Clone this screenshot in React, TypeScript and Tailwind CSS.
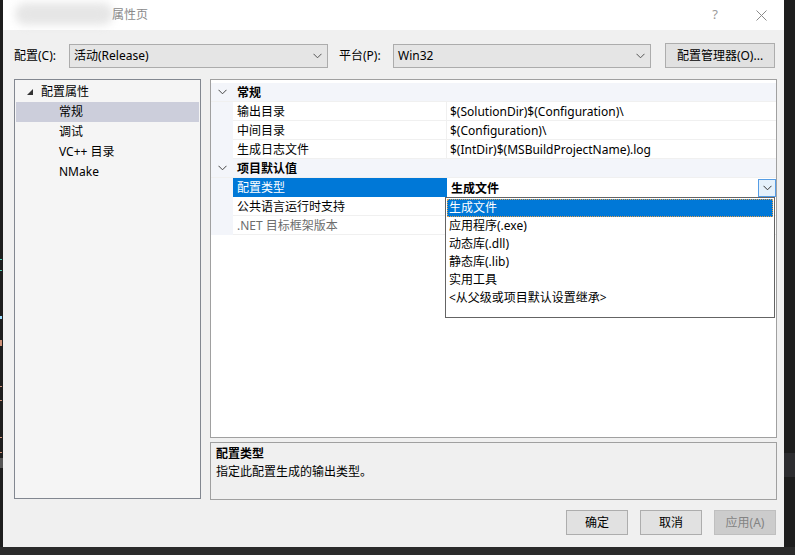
import React from "react";

const FONT = { fontFamily: '"Noto Sans", "Noto Sans CJK SC", sans-serif' };

function Chevron({ className = "" }: { className?: string }) {
  return (
    <svg width="9" height="6" viewBox="0 0 9 6" className={className}>
      <path d="M0.5 0.8 L4.5 4.8 L8.5 0.8" fill="none" stroke="currentColor" strokeWidth="1" />
    </svg>
  );
}

function GridHeader({ label }: { label: string }) {
  return (
    <div className="flex h-[19px] bg-[#f3f5fa] border-b border-[#f0f0f0]">
      <div className="w-[22px] flex items-center justify-center text-[#444]">
        <Chevron />
      </div>
      <div className="flex-1 pl-[4px] font-bold text-black leading-[19px]">{label}</div>
    </div>
  );
}

function GridRow({ name, value, dim }: { name: string; value: string; dim?: boolean }) {
  return (
    <div className="flex h-[19px]">
      <div className="w-[22px] bg-[#f3f5fa]" />
      <div className={`w-[214px] pl-[4px] leading-[19px] bg-white border-b border-[#f0f0f0] border-r border-r-[#f0f0f0] ${dim ? "text-[#6d6d6d]" : "text-black"}`}>
        {name}
      </div>
      <div className="flex-1 pl-[3px] leading-[19px] bg-white border-b border-[#f0f0f0] text-black">{value}</div>
    </div>
  );
}

export default function App() {
  return (
    <div className="relative w-[795px] h-[555px] bg-[#1e1e1e] overflow-hidden text-[12px]" style={FONT}>
      <div className="flex h-[547px]">
        {/* left dark strip with specks */}
        <div className="w-[3px] relative bg-[#1e1e1e]">
          <div className="absolute top-[259px] left-0 w-[2px] h-[1px] bg-[#4ec9b0]" />
          <div className="absolute top-[270px] left-0 w-[2px] h-[1px] bg-[#4ec9b0]" />
          <div className="absolute top-[316px] left-0 w-[2px] h-[3px] bg-[#9cdcfe]" />
          <div className="absolute top-[340px] left-0 w-[2px] h-[6px] bg-[#ce9178]" />
          <div className="absolute top-[386px] left-0 w-[2px] h-[1px] bg-[#ce9178]" />
          <div className="absolute top-[400px] left-0 w-[2px] h-[1px] bg-[#ce9178]" />
          <div className="absolute top-[437px] left-0 w-[2px] h-[1px] bg-[#ce9178]" />
          <div className="absolute top-[452px] left-0 w-[2px] h-[1px] bg-[#ce9178]" />
          <div className="absolute top-[458px] left-0 w-[3px] h-[10px] bg-[#555]" />
        </div>

        {/* dialog */}
        <div className="w-[781px] h-[547px] bg-[#f0f0f0] flex flex-col">
          {/* title bar */}
          <div className="h-[30px] bg-white flex items-center relative">
            <div className="absolute left-[12px] top-[3px] w-[98px] h-[22px] rounded-[10px] bg-[#e6e6e6] blur-[4px]" />
            <div className="ml-[109px] text-[#8a8a8a] text-[12px] relative">属性页</div>
            <div className="flex-1" />
            <div className="text-[#9a9a9a] text-[13px] mr-[38px]">?</div>
            <svg width="11" height="11" viewBox="0 0 11 11" className="mr-[17px] text-[#8a8a8a]">
              <path d="M0.5 0.5 L10.5 10.5 M10.5 0.5 L0.5 10.5" stroke="currentColor" strokeWidth="1" />
            </svg>
          </div>

          {/* config row */}
          <div className="flex items-center mt-[13px] h-[25px] pl-[11px]">
            <div className="w-[55px] text-black">配置(C):</div>
            <div className="w-[259px] h-[24px] border border-[#acacac] bg-[#e5e5e5] flex items-center pl-[4px] text-black">
              <span className="flex-1">活动(Release)</span>
              <Chevron className="mr-[5px] text-[#555]" />
            </div>
            <div className="ml-[11px] w-[54px] text-black">平台(P):</div>
            <div className="w-[258px] h-[24px] border border-[#acacac] bg-[#e5e5e5] flex items-center pl-[4px] text-black">
              <span className="flex-1">Win32</span>
              <Chevron className="mr-[5px] text-[#555]" />
            </div>
            <div className="ml-[14px] w-[110px] h-[25px] border border-[#adadad] bg-[#e1e1e1] flex items-center justify-center text-black">
              配置管理器(O)...
            </div>
          </div>

          {/* main area */}
          <div className="flex mt-[11px] pl-[11px]">
            {/* tree */}
            <div className="w-[187px] h-[420px] border border-[#828790] bg-[#f5f5f5] pt-[2px] px-[1px]">
              <div className="h-[20px] flex items-center text-black">
                <svg width="6" height="6" viewBox="0 0 6 6" className="ml-[11px] mr-[8px]">
                  <path d="M6 0 L6 6 L0 6 Z" fill="#333" />
                </svg>
                配置属性
              </div>
              <div className="h-[20px] flex items-center bg-[#cccedb] pl-[43px] text-black">常规</div>
              <div className="h-[20px] flex items-center pl-[43px] text-black">调试</div>
              <div className="h-[20px] flex items-center pl-[43px] text-black">VC++ 目录</div>
              <div className="h-[20px] flex items-center pl-[43px] text-black">NMake</div>
            </div>

            {/* right column */}
            <div className="ml-[9px] w-[567px] flex flex-col">
              <div className="relative h-[359px] border border-[#a0a0a0] bg-white">
                <div className="pt-[3px]">
                  <GridHeader label="常规" />
                  <GridRow name="输出目录" value="$(SolutionDir)$(Configuration)\" />
                  <GridRow name="中间目录" value="$(Configuration)\" />
                  <GridRow name="生成日志文件" value="$(IntDir)$(MSBuildProjectName).log" />
                  <GridHeader label="项目默认值" />
                  <div className="flex h-[19px]">
                    <div className="w-[22px] bg-[#f3f5fa]" />
                    <div className="w-[214px] pl-[4px] pt-[1px] leading-[18px] bg-[#0078d7] text-white">配置类型</div>
                    <div className="flex-1 flex items-center bg-white pl-[4px]">
                      <span className="flex-1 font-bold text-black pt-[2px]">生成文件</span>
                      <div className="w-[18px] h-[18px] border border-[#569de5] bg-[#e5f1fb] flex items-center justify-center text-[#333]">
                        <Chevron />
                      </div>
                    </div>
                  </div>
                  <GridRow name="公共语言运行时支持" value="" />
                  <GridRow name=".NET 目标框架版本" value="" dim />
                </div>

                {/* dropdown list */}
                <div className="absolute left-[234px] top-[117px] w-[330px] h-[121px] bg-white border border-[#646464] pt-[1px] px-[1px]">
                  <div className="h-[18px] bg-[#0078d7] text-white pl-[2px] leading-[18px] outline-1 outline-dotted outline-[#e0a050] -outline-offset-1">生成文件</div>
                  <div className="h-[18px] pl-[2px] leading-[18px] text-black">应用程序(.exe)</div>
                  <div className="h-[18px] pl-[2px] leading-[18px] text-black">动态库(.dll)</div>
                  <div className="h-[18px] pl-[2px] leading-[18px] text-black">静态库(.lib)</div>
                  <div className="h-[18px] pl-[2px] leading-[18px] text-black">实用工具</div>
                  <div className="h-[18px] pl-[2px] leading-[18px] text-black">&lt;从父级或项目默认设置继承&gt;</div>
                </div>
              </div>

              <div className="mt-[4px] h-[58px] border border-[#a0a0a0] bg-[#f0f0f0] px-[5px] pt-[2px]">
                <div className="font-bold text-black leading-[18px]">配置类型</div>
                <div className="text-black leading-[18px]">指定此配置生成的输出类型。</div>
              </div>
            </div>
          </div>

          {/* buttons */}
          <div className="flex justify-end mt-[10px] pr-[8px] gap-[12px]">
            <div className="w-[62px] h-[25px] border border-[#adadad] bg-[#e1e1e1] flex items-center justify-center text-black">确定</div>
            <div className="w-[62px] h-[25px] border border-[#adadad] bg-[#e1e1e1] flex items-center justify-center text-black">取消</div>
            <div className="w-[62px] h-[25px] border border-[#bfbfbf] bg-[#cccccc] flex items-center justify-center text-[#838383]">应用(A)</div>
          </div>
        </div>
        <div className="flex-1 bg-[#1e1e1e] relative">
          <div className="absolute left-0 top-[453px] w-[11px] h-[24px] bg-[#2d2d30]" />
        </div>
      </div>
      <div className="h-[8px] bg-[#2b2b2b]" />
    </div>
  );
}
